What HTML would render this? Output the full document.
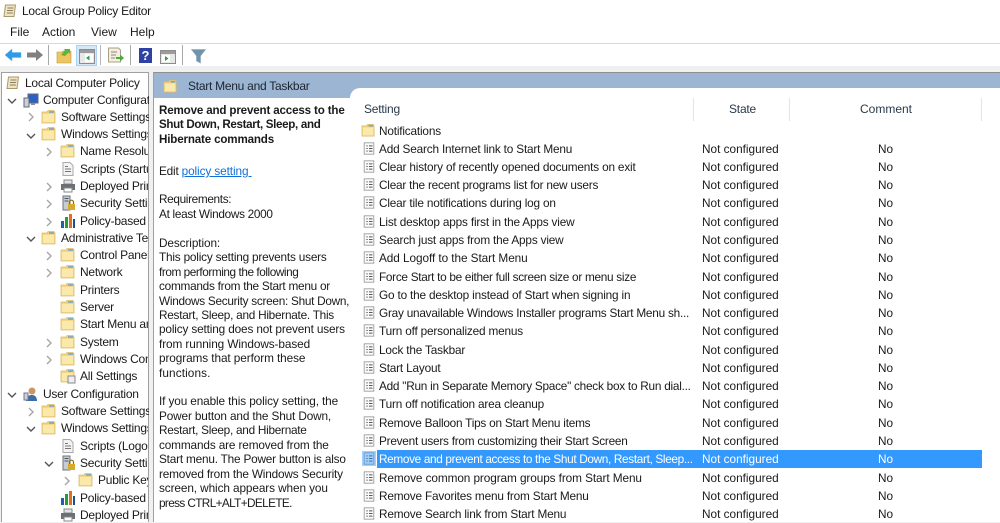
<!DOCTYPE html>
<html><head><meta charset="utf-8">
<style>
html,body{margin:0;padding:0}
body{width:1000px;height:522px;overflow:hidden;background:#f0f0f0;position:relative;font:12px "Liberation Sans",sans-serif;color:#1a1a1a;filter:blur(.3px)}
.a{position:absolute;white-space:nowrap}
.n{letter-spacing:-.26px}
.t{position:absolute;white-space:nowrap;line-height:16px;height:16px;letter-spacing:-.24px}
#tree{position:absolute;left:1px;top:72px;width:148px;height:450px;background:#fff;border:1px solid #a0a0a0;border-bottom:0;overflow:hidden;box-sizing:border-box}
.t{overflow:hidden}
svg.i{position:absolute;overflow:visible}
#desc div{position:absolute;left:159px;white-space:nowrap;line-height:15px;height:15px;font-size:11.8px;letter-spacing:-.2px}
#desc div.b{font-weight:bold;font-size:11.6px;letter-spacing:-.16px}
#list .s{position:absolute;left:379px;white-space:nowrap;line-height:16px;font-size:11.8px;letter-spacing:-.18px}
#list .st{position:absolute;left:702px;white-space:nowrap;line-height:16px;font-size:11.8px}
#list .c{position:absolute;left:878px;white-space:nowrap;line-height:16px;font-size:11.8px}
</style></head>
<body>
<svg width="0" height="0" style="position:absolute">
<defs>
<symbol id="fo" viewBox="0 0 16 16"><path d="M1 3h5l1-1.500h6l1 1.500v11H1z" fill="#f4d27a" stroke="#dcbc6c" stroke-width=".8"/><path d="M1.800 4.800h11.400v8.400H1.800z" fill="#fbe8ab"/><path d="M8 2.200h5v1.600H8z" fill="#6aa8d4"/></symbol>
<symbol id="doc" viewBox="0 0 16 16"><path d="M2.500 1.500h11v13h-11z" fill="#fafafa" stroke="#9b9b9b"/><path d="M5 5h1.500M5 8h1.500M5 11h1.500M8 5h4M8 8h4M8 11h4" stroke="#555" stroke-width="1.100"/></symbol>
<symbol id="scr" viewBox="0 0 16 16"><path d="M3 1.500h7l3 3v10H3z" fill="#f3f3f3" stroke="#aaa"/><path d="M5 5.500h3M5 8h6M5 10.500h6" stroke="#777"/></symbol>
<symbol id="pr" viewBox="0 0 16 16"><path d="M4 2h8v4H4z" fill="#e4e4e4" stroke="#888"/><path d="M1 6h14v6H1z" fill="#6b7078"/><path d="M4 10h8v4H4z" fill="#fff" stroke="#888"/></symbol>
<symbol id="sec" viewBox="0 0 16 16"><path d="M3 1h7v14H3z" fill="#c6ccd4" stroke="#6d7580"/><path d="M4.500 3.500h4M4.500 6h4" stroke="#4d5660"/><path d="M8 9h7v6H8z" fill="#d8a92a"/><path d="M9.500 9V7.200a2 2 0 0 1 4 0V9" fill="none" stroke="#8a6a10" stroke-width="1.200"/></symbol>
<symbol id="ch" viewBox="0 0 16 16"><path d="M1 8h3v7H1z" fill="#1d5fb0"/><path d="M5 4h3v11H5z" fill="#2a9a3a"/><path d="M9 1h3v14H9z" fill="#e07020"/><path d="M13 6h2v9h-2z" fill="#1d4f90"/></symbol>
<symbol id="ex" viewBox="0 0 8 10"><path d="M2 1l4 4-4 4" fill="none" stroke="#a6a6a6" stroke-width="1.400"/></symbol>
<symbol id="co" viewBox="0 0 10 8"><path d="M1 2l4 4 4-4" fill="none" stroke="#555" stroke-width="1.400"/></symbol>
<symbol id="scroll" viewBox="0 0 16 16"><path d="M3.500 2h10l-1.500 11.500H2z" fill="#efe3c0" stroke="#a89a70"/><path d="M5.500 5h6M5 7.500h6M4.800 10h6" stroke="#8b8060"/></symbol>
</defs>
</svg>

<!-- Title + Menu -->
<div style="position:absolute;left:0;top:0;width:1000px;height:43px;background:#fff"></div>
<div class="a n" style="left:22px;top:4px;font-size:12px;line-height:15px">Local Group Policy Editor</div>
<svg class="i" style="left:2px;top:3px" width="16" height="16"><use href="#scroll"/></svg>
<div class="a" style="left:10px;top:25px;line-height:15px">File</div>
<div class="a" style="left:42px;top:25px;line-height:15px">Action</div>
<div class="a" style="left:91px;top:25px;line-height:15px">View</div>
<div class="a" style="left:130px;top:25px;line-height:15px">Help</div>
<!-- Toolbar -->
<div style="position:absolute;left:0;top:43px;width:1000px;height:1px;background:#d9d9d9"></div>
<div style="position:absolute;left:0;top:44px;width:1000px;height:22px;background:#fff"></div>
<svg class="i" style="left:4px;top:47px" width="18" height="16"><path d="M1 8l7-6v3.500h9v5H8V14z" fill="#2f9ae6" stroke="#5fb8f0" stroke-width=".5"/></svg>
<svg class="i" style="left:26px;top:47px" width="18" height="16"><path d="M17 8l-7-6v3.500H1v5h9V14z" fill="#808080"/></svg>
<div style="position:absolute;left:48px;top:45px;width:1px;height:20px;background:#a8a8a8"></div>
<svg class="i" style="left:56px;top:47px" width="17" height="17"><path d="M1 5h5l1-1h8v12H1z" fill="#eec561" stroke="#b89a40" stroke-width=".6"/><path d="M5 8l4-5-1.500-1H14v5l-1.500-1.500L9 9z" fill="#5db53a"/></svg>
<div style="position:absolute;left:76px;top:45px;width:21px;height:21px;background:#d5e8f8;border:1px solid #a9d2f3;box-sizing:border-box"></div>
<svg class="i" style="left:79px;top:49px" width="16" height="15"><path d="M.500.500h15v14H.500z" fill="#e8e8e8" stroke="#8c8c8c"/><path d="M1 1h14v3H1z" fill="#9b9b9b"/><path d="M6 5h8v8H6z" fill="#fff"/><path d="M10.500 6.500v5L7 9z" fill="#2f9e44"/></svg>
<div style="position:absolute;left:100px;top:45px;width:1px;height:20px;background:#b4b4b4"></div>
<svg class="i" style="left:108px;top:47px" width="16" height="17"><path d="M.5 1h10l2 2v12H.5z" fill="#f3eedd" stroke="#a8a08a"/><path d="M3 5h6M3 8h5M3 11h4" stroke="#888"/><path d="M8 10h4V7.500l4 3.500-4 3.500V12H8z" fill="#4dab3c"/></svg>
<div style="position:absolute;left:130px;top:45px;width:1px;height:20px;background:#a8a8a8"></div>
<div class="a" style="left:139px;top:48px;width:13px;height:15px;background:#2e41a4;color:#fff;font:bold 13px/15px 'Liberation Sans',sans-serif;text-align:center">?</div>
<svg class="i" style="left:160px;top:50px" width="16" height="14"><path d="M.5.500h15v13H.5z" fill="#e8e8e8" stroke="#8c8c8c"/><path d="M1 1h14v3H1z" fill="#9b9b9b"/><path d="M2 5h8v7H2z" fill="#fff"/><path d="M5 6v5l3.500-2.500z" fill="#2f9e44"/></svg>
<div style="position:absolute;left:182px;top:45px;width:1px;height:20px;background:#a8a8a8"></div>
<svg class="i" style="left:191px;top:49px" width="15" height="15"><path d="M.5.500h14L9.500 7v7l-4-2V7z" fill="#6f93ad" stroke="#8aa6ba" stroke-width=".6"/></svg>

<!-- Tree -->
<div id="tree"></div>
<div class="a n" style="left:25px;top:76px;line-height:15px">Local Computer Policy</div>
<svg class="i" style="left:5px;top:75px" width="16" height="16"><use href="#scroll"/></svg>

<svg class="i" style="left:7px;top:97px" width="10" height="8"><use href="#co"/></svg>
<svg class="i" style="left:23px;top:93px" width="16" height="15"><path d="M5 1h10v9H5z" fill="#2a62c4" stroke="#667"/><path d="M8 10h4v2H8z" fill="#889"/><path d="M1 5h5v9H1z" fill="#c9d0d8" stroke="#667"/></svg>
<div class="t" style="left:43px;top:92px;width:106px">Computer Configuration</div>

<svg class="i" style="left:27px;top:112px" width="8" height="10"><use href="#ex"/></svg>
<svg class="i" style="left:41px;top:109px" width="16" height="16"><use href="#fo"/></svg>
<div class="t" style="left:61px;top:109px;width:88px">Software Settings</div>

<svg class="i" style="left:26px;top:132px" width="10" height="8"><use href="#co"/></svg>
<svg class="i" style="left:41px;top:126px" width="16" height="16"><use href="#fo"/></svg>
<div class="t" style="left:61px;top:126px;width:87px">Windows Settings</div>

<svg class="i" style="left:45px;top:147px" width="8" height="10"><use href="#ex"/></svg>
<svg class="i" style="left:60px;top:143px" width="16" height="16"><use href="#fo"/></svg>
<div class="t" style="left:80px;top:143px;width:68px">Name Resolution</div>

<svg class="i" style="left:60px;top:161px" width="16" height="16"><use href="#scr"/></svg>
<div class="t" style="left:80px;top:161px;width:68px">Scripts (Startup)</div>

<svg class="i" style="left:45px;top:182px" width="8" height="10"><use href="#ex"/></svg>
<svg class="i" style="left:60px;top:178px" width="16" height="16"><use href="#pr"/></svg>
<div class="t" style="left:80px;top:178px;width:68px">Deployed Printers</div>

<svg class="i" style="left:45px;top:199px" width="8" height="10"><use href="#ex"/></svg>
<svg class="i" style="left:60px;top:195px" width="16" height="16"><use href="#sec"/></svg>
<div class="t" style="left:80px;top:195px;width:68px">Security Settings</div>

<svg class="i" style="left:45px;top:217px" width="8" height="10"><use href="#ex"/></svg>
<svg class="i" style="left:60px;top:213px" width="16" height="16"><use href="#ch"/></svg>
<div class="t" style="left:80px;top:213px;width:68px">Policy-based QoS</div>

<svg class="i" style="left:26px;top:235px" width="10" height="8"><use href="#co"/></svg>
<svg class="i" style="left:41px;top:230px" width="16" height="16"><use href="#fo"/></svg>
<div class="t" style="left:61px;top:230px;width:87px">Administrative Templates</div>

<svg class="i" style="left:45px;top:251px" width="8" height="10"><use href="#ex"/></svg>
<svg class="i" style="left:60px;top:247px" width="16" height="16"><use href="#fo"/></svg>
<div class="t" style="left:80px;top:247px;width:68px">Control Panel</div>

<svg class="i" style="left:45px;top:268px" width="8" height="10"><use href="#ex"/></svg>
<svg class="i" style="left:60px;top:264px" width="16" height="16"><use href="#fo"/></svg>
<div class="t" style="left:80px;top:264px;width:68px">Network</div>

<svg class="i" style="left:60px;top:282px" width="16" height="16"><use href="#fo"/></svg>
<div class="t" style="left:80px;top:282px;width:68px">Printers</div>

<svg class="i" style="left:60px;top:299px" width="16" height="16"><use href="#fo"/></svg>
<div class="t" style="left:80px;top:299px;width:68px">Server</div>

<svg class="i" style="left:60px;top:316px" width="16" height="16"><use href="#fo"/></svg>
<div class="t" style="left:80px;top:316px;width:68px">Start Menu and Taskbar</div>

<svg class="i" style="left:45px;top:338px" width="8" height="10"><use href="#ex"/></svg>
<svg class="i" style="left:60px;top:334px" width="16" height="16"><use href="#fo"/></svg>
<div class="t" style="left:80px;top:334px;width:68px">System</div>

<svg class="i" style="left:45px;top:355px" width="8" height="10"><use href="#ex"/></svg>
<svg class="i" style="left:60px;top:351px" width="16" height="16"><use href="#fo"/></svg>
<div class="t" style="left:80px;top:351px;width:68px">Windows Components</div>

<svg class="i" style="left:60px;top:368px" width="16" height="16"><use href="#fo"/><path d="M8 8h7v7H8z" fill="#eee" stroke="#888"/></svg>
<div class="t" style="left:80px;top:368px;width:68px">All Settings</div>

<svg class="i" style="left:7px;top:391px" width="10" height="8"><use href="#co"/></svg>
<svg class="i" style="left:23px;top:386px" width="16" height="16"><circle cx="9" cy="5" r="3.500" fill="#c9986a"/><path d="M3 15c0-5 3-6 6-6s5 2 5 6z" fill="#3c6ea5"/><path d="M1 7h4v7H1z" fill="#c9d0d8" stroke="#778"/></svg>
<div class="t" style="left:43px;top:386px;width:106px">User Configuration</div>

<svg class="i" style="left:27px;top:407px" width="8" height="10"><use href="#ex"/></svg>
<svg class="i" style="left:41px;top:403px" width="16" height="16"><use href="#fo"/></svg>
<div class="t" style="left:61px;top:403px;width:88px">Software Settings</div>

<svg class="i" style="left:26px;top:425px" width="10" height="8"><use href="#co"/></svg>
<svg class="i" style="left:41px;top:420px" width="16" height="16"><use href="#fo"/></svg>
<div class="t" style="left:61px;top:420px;width:87px">Windows Settings</div>

<svg class="i" style="left:60px;top:438px" width="16" height="16"><use href="#scr"/></svg>
<div class="t" style="left:80px;top:438px;width:68px">Scripts (Logon)</div>

<svg class="i" style="left:44px;top:460px" width="10" height="8"><use href="#co"/></svg>
<svg class="i" style="left:60px;top:455px" width="16" height="16"><use href="#sec"/></svg>
<div class="t" style="left:80px;top:455px;width:68px">Security Settings</div>

<svg class="i" style="left:63px;top:476px" width="8" height="10"><use href="#ex"/></svg>
<svg class="i" style="left:78px;top:472px" width="16" height="16"><use href="#fo"/></svg>
<div class="t" style="left:98px;top:472px;width:50px">Public Key Policies</div>

<svg class="i" style="left:60px;top:490px" width="16" height="16"><use href="#ch"/></svg>
<div class="t" style="left:80px;top:490px;width:68px">Policy-based QoS</div>

<svg class="i" style="left:60px;top:507px" width="16" height="16"><use href="#pr"/></svg>
<div class="t" style="left:80px;top:507px;width:68px">Deployed Printers</div>

<!-- Right pane -->
<div style="position:absolute;left:153px;top:72px;width:847px;height:450px;background:#fff;border-left:1px solid #a0a0a0;border-top:1px solid #8f8f8f;box-sizing:border-box"></div>
<div style="position:absolute;left:154px;top:73px;width:846px;height:25px;background:#9bb5d3"></div>
<div style="position:absolute;left:350px;top:88px;width:650px;height:12px;background:#fff;border-top-left-radius:10px"></div>
<svg class="i" style="left:163px;top:79px" width="15" height="15"><use href="#fo"/></svg>
<div class="a n" style="left:188px;top:79px;line-height:15px;color:#1c2430">Start Menu and Taskbar</div>

<!-- Description -->
<div id="desc">
<div class="b" style="top:103px">Remove and prevent access to the</div>
<div class="b" style="top:117px;letter-spacing:-.33px">Shut Down, Restart, Sleep, and</div>
<div class="b" style="top:132px">Hibernate commands</div>
<div style="top:164px">Edit <span style="color:#0f6fd6;text-decoration:underline;letter-spacing:-.1px">policy setting&nbsp;</span></div>
<div style="top:192px;letter-spacing:-.35px">Requirements:</div>
<div style="top:207px;letter-spacing:-.3px">At least Windows 2000</div>
<div style="top:236px;letter-spacing:-.1px">Description:</div>
<div style="top:250px">This policy setting prevents users</div>
<div style="top:265px;letter-spacing:-.44px">from performing the following</div>
<div style="top:279px;letter-spacing:-.26px">commands from the Start menu or</div>
<div style="top:294px;letter-spacing:-.28px">Windows Security screen: Shut Down,</div>
<div style="top:308px;letter-spacing:-.26px">Restart, Sleep, and Hibernate. This</div>
<div style="top:322px;letter-spacing:-.15px">policy setting does not prevent users</div>
<div style="top:337px;letter-spacing:-.09px">from running Windows-based</div>
<div style="top:351px;letter-spacing:-.09px">programs that perform these</div>
<div style="top:366px;letter-spacing:.1px">functions.</div>
<div style="top:394px;letter-spacing:-.12px">If you enable this policy setting, the</div>
<div style="top:409px;letter-spacing:-.14px">Power button and the Shut Down,</div>
<div style="top:423px;letter-spacing:-.27px">Restart, Sleep, and Hibernate</div>
<div style="top:438px;letter-spacing:-.14px">commands are removed from the</div>
<div style="top:452px">Start menu. The Power button is also</div>
<div style="top:467px;letter-spacing:-.17px">removed from the Windows Security</div>
<div style="top:481px;letter-spacing:-.1px">screen, which appears when you</div>
<div style="top:496px;letter-spacing:-.63px">press CTRL+ALT+DELETE.</div>
</div>

<!-- Column headers -->
<div class="a" style="left:364px;top:102px;line-height:15px;color:#2a3a4a;letter-spacing:-.2px">Setting</div>
<div class="a" style="left:729px;top:102px;line-height:15px;color:#2a3a4a;letter-spacing:-.2px">State</div>
<div class="a" style="left:860px;top:102px;line-height:15px;color:#2a3a4a">Comment</div>
<div style="position:absolute;left:693px;top:98px;width:1px;height:23px;background:#e5e5e5"></div>
<div style="position:absolute;left:789px;top:98px;width:1px;height:23px;background:#e5e5e5"></div>
<div style="position:absolute;left:981px;top:98px;width:1px;height:23px;background:#e5e5e5"></div>

<!-- List -->
<div style="position:absolute;left:377px;top:450px;width:605px;height:18px;background:#3399ff"></div>
<svg class="i" style="left:361px;top:123px" width="15" height="15"><use href="#fo"/></svg>
<div id="list">
<div class="s" style="top:123px">Notifications</div>

<svg class="i" style="left:362px;top:141px" width="14" height="15"><use href="#doc"/></svg>
<div class="s" style="top:141px">Add Search Internet link to Start Menu</div><div class="st" style="top:141px">Not configured</div><div class="c" style="top:141px">No</div>
<svg class="i" style="left:362px;top:159px" width="14" height="15"><use href="#doc"/></svg>
<div class="s" style="top:159px">Clear history of recently opened documents on exit</div><div class="st" style="top:159px">Not configured</div><div class="c" style="top:159px">No</div>
<svg class="i" style="left:362px;top:177px" width="14" height="15"><use href="#doc"/></svg>
<div class="s" style="top:177px;letter-spacing:-.22px">Clear the recent programs list for new users</div><div class="st" style="top:177px">Not configured</div><div class="c" style="top:177px">No</div>
<svg class="i" style="left:362px;top:195px" width="14" height="15"><use href="#doc"/></svg>
<div class="s" style="top:195px">Clear tile notifications during log on</div><div class="st" style="top:195px">Not configured</div><div class="c" style="top:195px">No</div>
<svg class="i" style="left:362px;top:214px" width="14" height="15"><use href="#doc"/></svg>
<div class="s" style="top:214px">List desktop apps first in the Apps view</div><div class="st" style="top:214px">Not configured</div><div class="c" style="top:214px">No</div>
<svg class="i" style="left:362px;top:232px" width="14" height="15"><use href="#doc"/></svg>
<div class="s" style="top:232px">Search just apps from the Apps view</div><div class="st" style="top:232px">Not configured</div><div class="c" style="top:232px">No</div>
<svg class="i" style="left:362px;top:250px" width="14" height="15"><use href="#doc"/></svg>
<div class="s" style="top:250px;letter-spacing:-.07px">Add Logoff to the Start Menu</div><div class="st" style="top:250px">Not configured</div><div class="c" style="top:250px">No</div>
<svg class="i" style="left:362px;top:269px" width="14" height="15"><use href="#doc"/></svg>
<div class="s" style="top:269px;letter-spacing:-.29px">Force Start to be either full screen size or menu size</div><div class="st" style="top:269px">Not configured</div><div class="c" style="top:269px">No</div>
<svg class="i" style="left:362px;top:287px" width="14" height="15"><use href="#doc"/></svg>
<div class="s" style="top:287px">Go to the desktop instead of Start when signing in</div><div class="st" style="top:287px">Not configured</div><div class="c" style="top:287px">No</div>
<svg class="i" style="left:362px;top:305px" width="14" height="15"><use href="#doc"/></svg>
<div class="s" style="top:305px;letter-spacing:-.23px">Gray unavailable Windows Installer programs Start Menu sh...</div><div class="st" style="top:305px">Not configured</div><div class="c" style="top:305px">No</div>
<svg class="i" style="left:362px;top:323px" width="14" height="15"><use href="#doc"/></svg>
<div class="s" style="top:323px">Turn off personalized menus</div><div class="st" style="top:323px">Not configured</div><div class="c" style="top:323px">No</div>
<svg class="i" style="left:362px;top:342px" width="14" height="15"><use href="#doc"/></svg>
<div class="s" style="top:342px">Lock the Taskbar</div><div class="st" style="top:342px">Not configured</div><div class="c" style="top:342px">No</div>
<svg class="i" style="left:362px;top:360px" width="14" height="15"><use href="#doc"/></svg>
<div class="s" style="top:360px">Start Layout</div><div class="st" style="top:360px">Not configured</div><div class="c" style="top:360px">No</div>
<svg class="i" style="left:362px;top:378px" width="14" height="15"><use href="#doc"/></svg>
<div class="s" style="top:378px;letter-spacing:-.25px">Add "Run in Separate Memory Space" check box to Run dial...</div><div class="st" style="top:378px">Not configured</div><div class="c" style="top:378px">No</div>
<svg class="i" style="left:362px;top:396px" width="14" height="15"><use href="#doc"/></svg>
<div class="s" style="top:396px">Turn off notification area cleanup</div><div class="st" style="top:396px">Not configured</div><div class="c" style="top:396px">No</div>
<svg class="i" style="left:362px;top:415px" width="14" height="15"><use href="#doc"/></svg>
<div class="s" style="top:415px;letter-spacing:-.23px">Remove Balloon Tips on Start Menu items</div><div class="st" style="top:415px">Not configured</div><div class="c" style="top:415px">No</div>
<svg class="i" style="left:362px;top:433px" width="14" height="15"><use href="#doc"/></svg>
<div class="s" style="top:433px;letter-spacing:-.24px">Prevent users from customizing their Start Screen</div><div class="st" style="top:433px">Not configured</div><div class="c" style="top:433px">No</div>
<svg class="i" style="left:362px;top:451px" width="14" height="15"><use href="#doc"/><rect width="14" height="15" fill="#3399ff" opacity=".45"/></svg>
<div class="s" style="top:451px;color:#fff;letter-spacing:-.34px">Remove and prevent access to the Shut Down, Restart, Sleep...</div><div class="st" style="top:451px;color:#fff">Not configured</div><div class="c" style="top:451px;color:#fff">No</div>
<svg class="i" style="left:362px;top:470px" width="14" height="15"><use href="#doc"/></svg>
<div class="s" style="top:470px;letter-spacing:-.09px">Remove common program groups from Start Menu</div><div class="st" style="top:470px">Not configured</div><div class="c" style="top:470px">No</div>
<svg class="i" style="left:362px;top:488px" width="14" height="15"><use href="#doc"/></svg>
<div class="s" style="top:488px">Remove Favorites menu from Start Menu</div><div class="st" style="top:488px">Not configured</div><div class="c" style="top:488px">No</div>
<svg class="i" style="left:362px;top:506px" width="14" height="15"><use href="#doc"/></svg>
<div class="s" style="top:506px">Remove Search link from Start Menu</div><div class="st" style="top:506px">Not configured</div><div class="c" style="top:506px">No</div>
</div>
</body></html>
